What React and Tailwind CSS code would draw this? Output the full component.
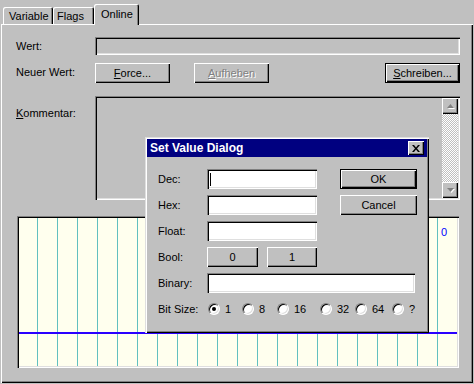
const sunken =
  "shadow-[inset_1px_1px_0_#808080,inset_2px_2px_0_#000,inset_-1px_-1px_0_#fff,inset_-2px_-2px_0_#dfdfdf]"

function Button({ children, className = "", isDefault = false, disabled = false }) {
  if (isDefault) {
    return (
      <div className={"border border-black bg-[#c0c0c0] " + className}>
        <div className="h-full w-full flex items-center justify-center shadow-[inset_1px_1px_0_#fff,inset_-1px_-1px_0_#000,inset_-2px_-2px_0_#808080]">
          {children}
        </div>
      </div>
    )
  }
  return (
    <div
      className={
        "flex items-center justify-center bg-[#c0c0c0] shadow-[inset_1px_1px_0_#fff,inset_-1px_-1px_0_#000,inset_-2px_-2px_0_#808080] " +
        (disabled ? "text-[#808080] [text-shadow:1px_1px_0_#fff] " : "") +
        className
      }
    >
      {children}
    </div>
  )
}

function Radio({ checked }) {
  return (
    <div className="w-[12px] h-[12px] shrink-0 rounded-full bg-white border border-t-[#808080] border-l-[#808080] border-r-white border-b-white shadow-[inset_1px_1px_0_#000,inset_-1px_-1px_0_#dfdfdf] flex items-center justify-center">
      {checked && <div className="w-[4px] h-[4px] rounded-full bg-black" />}
    </div>
  )
}

function Field({ className = "", white = false }) {
  return <div className={sunken + " " + (white ? "bg-white " : "bg-[#c0c0c0] ") + className} />
}

function Arrow({ up }) {
  return (
    <svg width="7" height="4" viewBox="0 0 7 4" className="[filter:drop-shadow(1px_1px_0_#fff)]">
      {up ? <path d="M3.5 0 L7 4 L0 4 Z" fill="#808080" /> : <path d="M0 0 L7 0 L3.5 4 Z" fill="#808080" />}
    </svg>
  )
}

export default function App() {
  const radios = [
    { label: "1", w: "w-[34px]", checked: true },
    { label: "8", w: "w-[35px]" },
    { label: "16", w: "w-[43px]" },
    { label: "32", w: "w-[35px]" },
    { label: "64", w: "w-[37px]" },
    { label: "?", w: "w-[30px]" },
  ]

  return (
    <div className="relative w-[474px] h-[384px] overflow-hidden bg-[#c0c0c0] text-black text-[11px] leading-[13px] font-['Liberation_Sans',Arial,sans-serif]">
      {/* tabs */}
      <div className="h-[24px] flex items-end pl-[3px]">
        <div className="h-[17px] w-[50px] pl-[6px] pt-[3px] rounded-t-[2px] shadow-[inset_1px_1px_0_#fff,inset_-1px_0_0_#000,inset_-2px_0_0_#808080]">
          Variable
        </div>
        <div className="h-[17px] w-[41px] pl-[4px] pt-[3px] rounded-t-[2px] shadow-[inset_1px_1px_0_#fff,inset_-1px_0_0_#000,inset_-2px_0_0_#808080]">
          Flags
        </div>
        <div className="relative z-10 -mb-[1px] h-[21px] w-[45px] pl-[7px] pt-[4px] bg-[#c0c0c0] rounded-t-[2px] shadow-[inset_1px_1px_0_#fff,inset_-1px_0_0_#000,inset_-2px_0_0_#808080]">
          Online
        </div>
      </div>

      {/* panel */}
      <div className="ml-[1px] w-[472px] h-[359px] pl-[15px] pt-[13px] shadow-[inset_1px_1px_0_#fff,inset_-1px_-1px_0_#000,inset_-2px_-2px_0_#808080]">
        <div className="flex items-center h-[18px]">
          <div className="w-[79px]">Wert:</div>
          <Field className="w-[365px] h-[18px]" />
        </div>

        <div className="flex items-center h-[20px] mt-[8px]">
          <div className="w-[79px] -mt-[2px]">Neuer Wert:</div>
          <Button className="w-[75px] h-[20px]">
            <span><u>F</u>orce...</span>
          </Button>
          <Button className="w-[75px] h-[20px] ml-[24px]" disabled>
            <span><u>A</u>ufheben</span>
          </Button>
          <Button className="w-[75px] h-[20px] ml-[116px]" isDefault>
            <span><u>S</u>chreiben...</span>
          </Button>
        </div>

        <div className="flex items-start mt-[13px]">
          <div className="w-[79px] pt-[11px]"><u>K</u>ommentar:</div>
          <div className={"w-[365px] h-[104px] p-[2px] flex justify-end bg-[#c0c0c0] " + sunken}>
            <div className="w-[16px] h-[100px] flex flex-col bg-[repeating-conic-gradient(#c0c0c0_0%_25%,#fff_0%_50%)] bg-[length:2px_2px]">
              <Button className="w-[16px] h-[16px]"><Arrow up /></Button>
              <div className="flex-1" />
              <Button className="w-[16px] h-[16px]"><Arrow /></Button>
            </div>
          </div>
        </div>

        <div className={"mt-[16px] ml-[1px] w-[442px] h-[152px] p-[2px] " + sunken}>
          <div className="relative w-full h-full overflow-hidden bg-[#ffffee] flex">
            <div className="w-[18px] shrink-0" />
            {Array.from({ length: 21 }).map((_, i) => (
              <div key={i} className="w-[20px] shrink-0 h-full border-l border-[#62c0c0]" />
            ))}
            <div className="absolute left-0 right-0 top-[114px] h-[2px] bg-[#2a00ff]" />
            <div className="absolute left-[422px] top-[8px] text-[#0000ff]">0</div>
          </div>
        </div>
      </div>

      {/* dialog */}
      <div className="absolute left-[145px] top-[137px] w-[284px] h-[196px] p-[2px] bg-[#c0c0c0] shadow-[inset_1px_1px_0_#dfdfdf,inset_2px_2px_0_#fff,inset_-1px_-1px_0_#000,inset_-2px_-2px_0_#808080]">
        <div className="h-[18px] bg-[#000080] flex items-center pl-[3px] pr-[3px] text-white font-bold text-[12px]">
          <span>Set Value Dialog</span>
          <Button className="ml-auto w-[16px] h-[14px]">
            <svg width="8" height="7" viewBox="0 0 8 7">
              <path d="M0 0h2l2 2.5L6 0h2L5 3.5 8 7H6L4 4.5 2 7H0l3-3.5z" fill="#000" />
            </svg>
          </Button>
        </div>

        <div className="pl-[11px] pt-[12px] flex flex-col gap-[6px]">
          <div className="flex items-center h-[20px]">
            <div className="w-[49px]">Dec:</div>
            <div className={"w-[110px] h-[20px] bg-white flex items-center pl-[3px] " + sunken}>
              <div className="w-[1px] h-[13px] bg-black" />
            </div>
            <Button className="ml-[23px] w-[77px] h-[20px]" isDefault>OK</Button>
          </div>
          <div className="flex items-center h-[20px]">
            <div className="w-[49px]">Hex:</div>
            <Field className="w-[110px] h-[20px]" white />
            <Button className="ml-[23px] w-[77px] h-[20px]">Cancel</Button>
          </div>
          <div className="flex items-center h-[20px]">
            <div className="w-[49px]">Float:</div>
            <Field className="w-[110px] h-[20px]" white />
          </div>
          <div className="flex items-center h-[20px]">
            <div className="w-[49px]">Bool:</div>
            <Button className="w-[51px] h-[20px]">0</Button>
            <Button className="ml-[9px] w-[50px] h-[20px]">1</Button>
          </div>
          <div className="flex items-center h-[20px]">
            <div className="w-[49px]">Binary:</div>
            <Field className="w-[208px] h-[20px]" white />
          </div>
          <div className="flex items-center h-[18px] mt-[1px]">
            <div className="w-[50px]">Bit Size:</div>
            {radios.map((r) => (
              <div key={r.label} className={"flex items-center gap-[5px] " + r.w}>
                <Radio checked={r.checked} />
                <span>{r.label}</span>
              </div>
            ))}
          </div>
        </div>
      </div>
    </div>
  )
}
